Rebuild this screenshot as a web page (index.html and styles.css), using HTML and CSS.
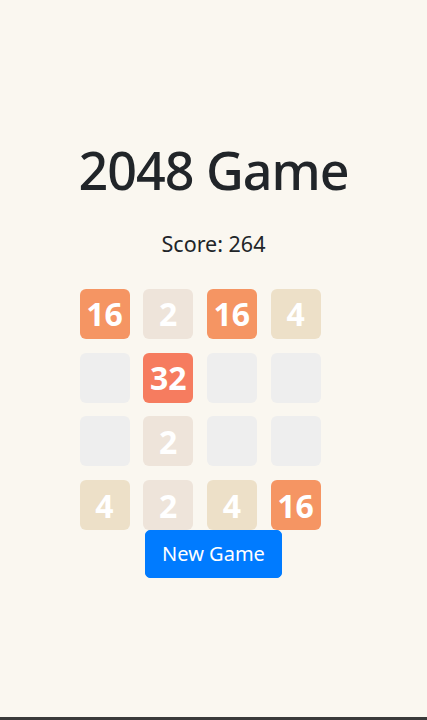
FILE: index.html
```html
<!DOCTYPE html>
<html lang="en">
<head>
<meta charset="utf-8">
<title>2048 Game</title>
<link rel="stylesheet" href="styles.css">
</head>
<body>
<div class="page">
  <main class="game">
    <h1 class="title">2048 Game</h1>
    <p class="score">Score: 264</p>
    <div class="board-wrap">
      <div class="board">
        <div class="tile t16">16</div>
        <div class="tile t2">2</div>
        <div class="tile t16">16</div>
        <div class="tile t4">4</div>
        <div class="tile empty"></div>
        <div class="tile t32">32</div>
        <div class="tile empty"></div>
        <div class="tile empty"></div>
        <div class="tile empty"></div>
        <div class="tile t2">2</div>
        <div class="tile empty"></div>
        <div class="tile empty"></div>
        <div class="tile t4">4</div>
        <div class="tile t2">2</div>
        <div class="tile t4">4</div>
        <div class="tile t16">16</div>
      </div>
    </div>
    <button class="btn-new" type="button">New Game</button>
  </main>
  <div class="bottom-bar"></div>
</div>
</body>
</html>
```
FILE: styles.css
```css
* { box-sizing: border-box; }
html, body { margin: 0; padding: 0; }
body {
  background: #faf7f0;
  color: #212529;
  font-family: "Noto Sans", "Open Sans", "DejaVu Sans", sans-serif;
}
.page {
  min-height: 100vh;
  display: flex;
  flex-direction: column;
}
.game {
  display: flex;
  flex-direction: column;
  align-items: center;
  padding-top: 138.6px;
}
.title {
  margin: 0;
  font-size: 52px;
  line-height: 62px;
  font-weight: 500;
  letter-spacing: -1px;
}
.score {
  margin: 27.4px 0 0;
  font-size: 21.5px;
  line-height: 32px;
}
.board-wrap {
  margin-top: 29px;
  width: 268px;
  padding-right: 26px;
}
.board {
  display: grid;
  grid-template-columns: repeat(4, 50px);
  grid-auto-rows: 50px;
  gap: 13.7px;
}
.tile {
  border-radius: 6px;
  display: flex;
  align-items: center;
  justify-content: center;
  color: #fff;
  font-weight: 700;
  font-size: 32px;
}
.empty { background: #eeeeee; }
.t2 { background: #eee4da; }
.t4 { background: #ede0c8; }
.t16 { background: #f59563; }
.t32 { background: #f67c5f; }
.btn-new {
  font-family: inherit;
  font-size: 20px;
  line-height: 30px;
  padding: 8px 16px;
  border: 1px solid #007bff;
  background: #007bff;
  color: #fff;
  border-radius: 5px;
  cursor: pointer;
}
.bottom-bar {
  margin-top: auto;
  height: 3px;
  background: #3a3a3a;
}
```
